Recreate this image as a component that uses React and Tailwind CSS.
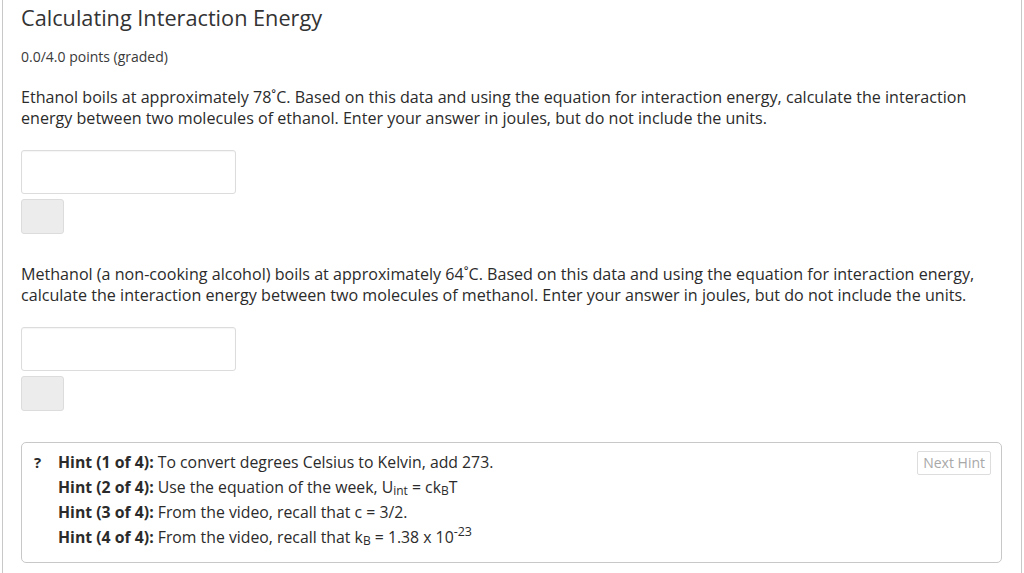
import React from 'react';

const font = { fontFamily: '"Open Sans", "Noto Sans", sans-serif' };

const Answer = () => (
    <div className="mt-[21px]">
        <input
            type="text"
            className="block w-[215px] h-[44px] rounded-[3px] border border-[#dcdcdc] bg-white shadow-[inset_0_1px_1px_rgba(0,0,0,0.04)]"
        />
        <button className="block mt-[5px] w-[43px] h-[35px] rounded-[3px] border border-[#dcdcdc] bg-[#ececec]" />
    </div>
);

const hints = [
    { label: 'Hint (1 of 4):', text: <>To convert degrees Celsius to Kelvin, add 273.</> },
    {
        label: 'Hint (2 of 4):',
        text: (
            <>
                Use the equation of the week, U<sub className="text-[12px] relative top-[2px]">int</sub> = ck
                <sub className="text-[12px] relative top-[2px]">B</sub>T
            </>
        ),
    },
    { label: 'Hint (3 of 4):', text: <>From the video, recall that c = 3/2.</> },
    {
        label: 'Hint (4 of 4):',
        text: (
            <>
                From the video, recall that k<sub className="text-[12px] relative top-[2px]">B</sub> = 1.38 x 10
                <sup className="text-[12.5px] relative top-[-0.6em]">-23</sup>
            </>
        ),
    },
];

export default function App() {
    return (
        <div className="bg-white min-h-[573px] text-[#2b2b2b]" style={font}>
            <div className="ml-[2px] w-[1020px] min-h-[573px] border-l border-r border-[#c8c8c8] pl-[18px] pr-[19px] pt-[4px]">
                <h2 className="text-[21.7px] leading-[28px] font-normal text-[#333]">Calculating Interaction Energy</h2>
                <div className="mt-[16px] text-[14px] leading-[18px] text-[#3a3a3a]">0.0/4.0 points (graded)</div>

                <p className="mt-[21px] text-[16.1px] leading-[21px]">
                    Ethanol boils at approximately 78˚C. Based on this data and using the equation for interaction
                    energy, calculate the interaction energy between two molecules of ethanol. Enter your answer in
                    joules, but do not include the units.
                </p>
                <Answer />

                <p className="mt-[30px] text-[16.1px] leading-[21px]">
                    Methanol (a non-cooking alcohol) boils at approximately 64˚C. Based on this data and using the
                    equation for interaction energy, calculate the interaction energy between two molecules of
                    methanol. Enter your answer in joules, but do not include the units.
                </p>
                <Answer />

                <div className="mt-[31px] mr-[1px] w-[981px] rounded-[5px] border border-[#c8c8c8] pl-[12px] pr-[10px] pt-[7px] pb-[12px] flex">
                    <div className="w-[24px] text-[15px] leading-[25px] font-bold">?</div>
                    <div className="flex-1 text-[15.8px] leading-[25px]">
                        {hints.map((h) => (
                            <div key={h.label}>
                                <span className="font-bold">{h.label}</span> {h.text}
                            </div>
                        ))}
                    </div>
                    <button className="self-start mt-[1px] h-[24px] px-[5px] rounded-[2px] border border-[#dddddd] text-[14px] leading-[20px] text-[#a8a8a8] bg-white">
                        Next Hint
                    </button>
                </div>
            </div>
        </div>
    );
}
